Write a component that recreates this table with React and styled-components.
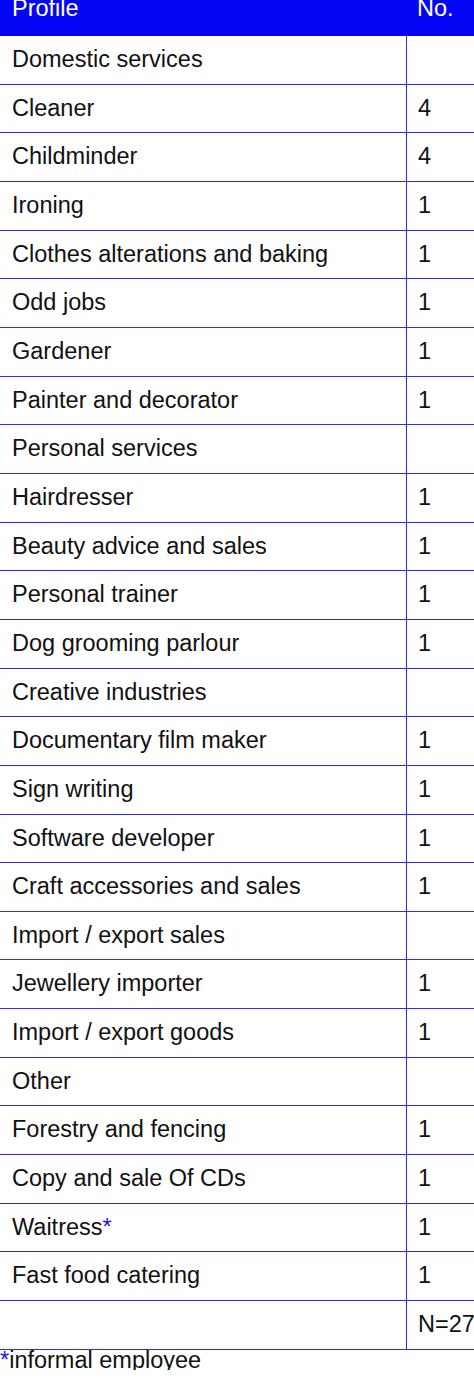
import React from 'react';
import styled, {createGlobalStyle} from 'styled-components';

const GlobalStyle = createGlobalStyle`
  html, body {
    margin: 0;
    padding: 0;
    background: #ffffff;
  }
  body {
    font-family: "Liberation Sans", Arial, Helvetica, sans-serif;
    color: #111111;
  }
`;

const Table = styled.div`
  width: 474px;
`;

const HeadRow = styled.div`
  display: grid;
  grid-template-columns: 406px 1fr;
  height: 36px;
  overflow: hidden;
  background: #0505f5;
  color: #ffffff;
  font-size: 23.5px;
  line-height: 16px;
  white-space: nowrap;
`;

const HeadCell = styled.div`
  padding-left: ${props => props.num ? '11px' : '12px'};
`;

const Row = styled.div`
  display: grid;
  grid-template-columns: 406px 1fr;
  height: 48.67px;
  box-sizing: border-box;
  border-bottom: 1.3px solid #2c2ce8;
  font-size: 23.5px;
  line-height: 47.4px;
  white-space: nowrap;
`;

const Cell = styled.div`
  padding-left: 12px;
`;

const NumCell = styled.div`
  padding-left: 11px;
  border-left: 1.3px solid #2c2ce8;
`;

const Star = styled.span`
  color: #1a1ae6;
`;

const Note = styled.div`
  font-size: 23.5px;
  line-height: 20px;
  white-space: nowrap;
`;

const rows = [
  ['Domestic services', ''],
  ['Cleaner', '4'],
  ['Childminder', '4'],
  ['Ironing', '1'],
  ['Clothes alterations and baking', '1'],
  ['Odd jobs', '1'],
  ['Gardener', '1'],
  ['Painter and decorator', '1'],
  ['Personal services', ''],
  ['Hairdresser', '1'],
  ['Beauty advice and sales', '1'],
  ['Personal trainer', '1'],
  ['Dog grooming parlour', '1'],
  ['Creative industries', ''],
  ['Documentary film maker', '1'],
  ['Sign writing', '1'],
  ['Software developer', '1'],
  ['Craft accessories and sales', '1'],
  ['Import / export sales', ''],
  ['Jewellery importer', '1'],
  ['Import / export goods', '1'],
  ['Other', ''],
  ['Forestry and fencing', '1'],
  ['Copy and sale Of CDs', '1'],
  ['Waitress', '1', true],
  ['Fast food catering', '1'],
  ['', 'N=27'],
];

export default function App() {
  return (
    <>
      <GlobalStyle />
      <Table>
        <HeadRow>
          <HeadCell>Profile</HeadCell>
          <HeadCell num>No.</HeadCell>
        </HeadRow>
        {rows.map(([name, num, star], i) => (
          <Row key={i}>
            <Cell>{name}{star && <Star>*</Star>}</Cell>
            <NumCell>{num}</NumCell>
          </Row>
        ))}
        <Note><Star>*</Star>informal employee</Note>
      </Table>
    </>
  );
}
